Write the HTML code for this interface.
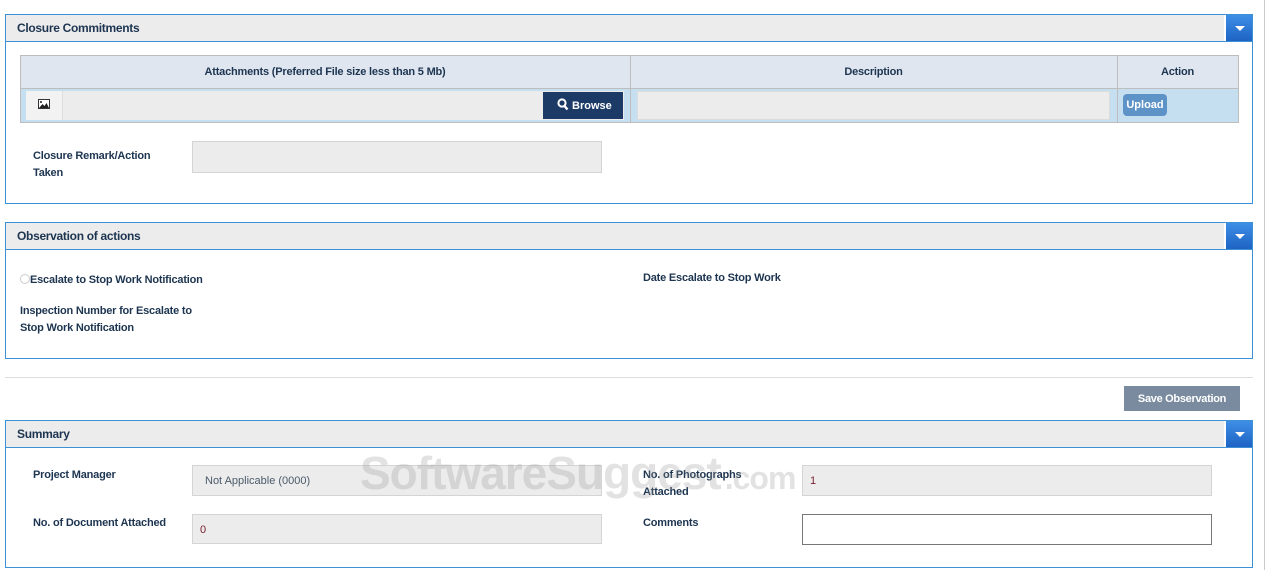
<!DOCTYPE html>
<html><head><meta charset="utf-8"><style>
*{box-sizing:border-box;margin:0;padding:0}
body{width:1268px;height:570px;background:#fff;font-family:"Liberation Sans",sans-serif;font-size:11px;color:#1a3a5c;position:relative;overflow:hidden}
.a{position:absolute}
.panel{position:absolute;left:5px;width:1248px;border:1px solid #3d8fd6;background:#fff}
.hd{position:absolute;left:0;top:0;right:0;height:27px;background:#ececec;border-bottom:1px solid #3d8fd6;font-size:12px;font-weight:bold;color:#1d3550;padding:6px 0 0 11px;letter-spacing:-0.3px}
.dd{position:absolute;right:0;top:0;width:28px;height:26px;background:linear-gradient(#3f8fe6,#1d63c4);border-left:2px solid #fff}
.dd:after{content:"";position:absolute;left:9px;top:11px;border-left:5px solid transparent;border-right:5px solid transparent;border-top:5px solid #fff}
.lb{position:absolute;font-weight:bold;font-size:11px;color:#1d3550;line-height:17px;letter-spacing:-0.2px}
.in{position:absolute;background:#ececec;border:1px solid #d4d4d4;font-size:11px;color:#4a5a6a;padding-left:12px}
</style></head><body>
<div class="a" style="left:1264px;top:0;width:1px;height:570px;background:#ccc"></div>

<div class="panel" style="top:14px;height:190px">
 <div class="hd">Closure Commitments</div><div class="dd"></div>
</div>
<div class="a" style="left:20px;top:55px;width:1219px;height:68px;border:1px solid #bdbdbd;background:#dfe6f0"></div>
<div class="a" style="left:21px;top:88px;width:1217px;height:1px;background:#bdbdbd"></div>
<div class="a" style="left:21px;top:89px;width:1217px;height:33px;background:#c5dff0"></div>
<div class="a" style="left:630px;top:56px;width:1px;height:66px;background:#bdbdbd"></div>
<div class="a" style="left:1117px;top:56px;width:1px;height:66px;background:#bdbdbd"></div>
<div class="lb" style="left:20px;width:610px;top:64px;text-align:center">Attachments (Preferred File size less than 5 Mb)</div>
<div class="lb" style="left:630px;width:487px;top:64px;text-align:center">Description</div>
<div class="lb" style="left:1117px;width:121px;top:64px;text-align:center">Action</div>
<div class="a" style="left:26px;top:91px;width:37px;height:29px;background:#f2f2f2;border-right:1px solid #ddd"></div>
<svg class="a" style="left:38px;top:99px" width="12" height="10" viewBox="0 0 12 10"><rect x="0.5" y="0.5" width="11" height="9" fill="#fff" stroke="#333"/><path d="M1 9L4.5 5 6.5 7 8.5 4 11 9Z" fill="#222"/><rect x="2" y="2" width="2" height="2" fill="#555"/></svg>
<div class="a" style="left:63px;top:91px;width:561px;height:29px;background:#ececec"></div>
<div class="a" style="left:543px;top:92px;width:80px;height:27px;background:#1b3a66;color:#fff;font-weight:bold;font-size:11px;padding:8px 0 0 14px">
 <svg class="a" style="left:14px;top:6px" width="12" height="13" viewBox="0 0 12 13"><circle cx="5" cy="5" r="3.6" fill="none" stroke="#fff" stroke-width="2"/><path d="M7.5 8l3 3.5" stroke="#fff" stroke-width="2.4"/></svg>
 <span style="margin-left:15px">Browse</span></div>
<div class="a" style="left:637px;top:91px;width:473px;height:29px;background:#ececec;border:1px solid #dcdcdc"></div>
<div class="a" style="left:1123px;top:94px;width:44px;height:22px;background:#5e93c8;border-radius:4px;color:#fff;font-weight:bold;font-size:11px;text-align:center;line-height:22px">Upload</div>
<div class="lb" style="left:33px;top:148px">Closure Remark/Action<br>Taken</div>
<div class="in" style="left:192px;top:141px;width:410px;height:32px"></div>

<div class="panel" style="top:222px;height:137px">
 <div class="hd">Observation of actions</div><div class="dd"></div>
</div>
<div class="a" style="left:20px;top:274px;width:10px;height:10px;border:1px solid #ccc;border-radius:50%"></div>
<div class="lb" style="left:30px;top:272px">Escalate to Stop Work Notification</div>
<div class="lb" style="left:20px;top:303px">Inspection Number for Escalate to<br>Stop Work Notification</div>
<div class="lb" style="left:643px;top:270px">Date Escalate to Stop Work</div>

<div class="a" style="left:5px;top:377px;width:1248px;height:1px;background:#ddd"></div>
<div class="a" style="left:1124px;top:386px;width:116px;height:25px;background:#7a8ba0;color:#fff;font-weight:bold;font-size:11px;text-align:center;line-height:26px;letter-spacing:-0.3px">Save Observation</div>

<div class="panel" style="top:420px;height:148px">
 <div class="hd">Summary</div><div class="dd"></div>
</div>
<div class="lb" style="left:33px;top:467px">Project Manager</div>
<div class="in" style="left:192px;top:465px;width:410px;height:31px;line-height:30px">Not Applicable (0000)</div>
<div class="lb" style="left:643px;top:467px">No. of Photographs<br>Attached</div>
<div class="in" style="left:802px;top:465px;width:410px;height:31px;line-height:30px;padding-left:7px;color:#7a2030">1</div>
<div class="lb" style="left:33px;top:515px">No. of Document Attached</div>
<div class="in" style="left:192px;top:514px;width:410px;height:30px;line-height:30px;padding-left:7px;color:#7a2030">0</div>
<div class="lb" style="left:643px;top:515px">Comments</div>
<div class="a" style="left:802px;top:514px;width:410px;height:31px;border:1px solid #777;background:#fff"></div>
<div class="a" style="left:360px;top:446px;font-size:46px;font-weight:bold;color:rgba(150,150,150,0.28);letter-spacing:-1px;white-space:nowrap;pointer-events:none">SoftwareSuggest<span style="font-size:32px;margin-left:4px">.com</span></div>
</body></html>
